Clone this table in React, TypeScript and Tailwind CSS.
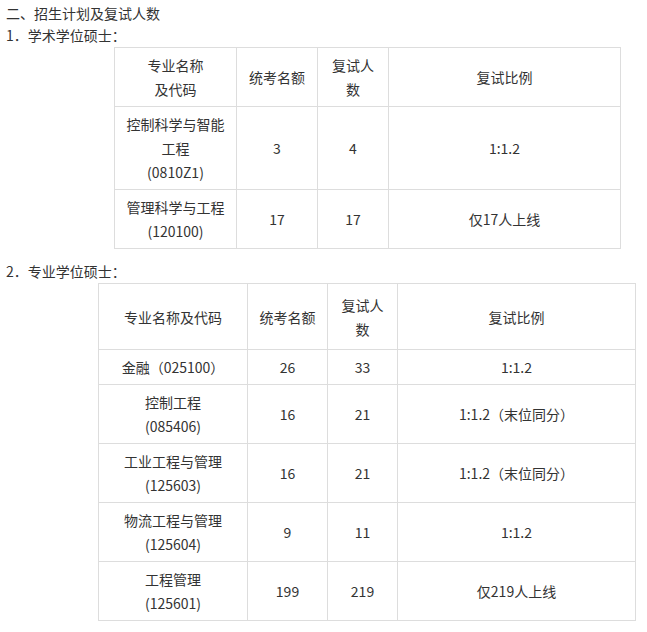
import React from 'react';

type Row = { h: string; cells: React.ReactNode[] };

const academic: Row[] = [
  {
    h: 'h-[59px]',
    cells: [
      <>专业名称<br />及代码</>,
      '统考名额',
      <>复试人<br />数</>,
      '复试比例',
    ],
  },
  {
    h: 'h-[83px]',
    cells: [<>控制科学与智能<br />工程<br />(0810Z1)</>, '3', '4', '1:1.2'],
  },
  {
    h: 'h-[59px]',
    cells: [<>管理科学与工程<br />(120100)</>, '17', '17', '仅17人上线'],
  },
];

const professional: Row[] = [
  {
    h: 'h-[66px]',
    cells: ['专业名称及代码', '统考名额', <>复试人<br />数</>, '复试比例'],
  },
  { h: 'h-[35px]', cells: ['金融（025100）', '26', '33', '1:1.2'] },
  { h: 'h-[59px]', cells: [<>控制工程<br />(085406)</>, '16', '21', '1:1.2（末位同分）'] },
  { h: 'h-[59px]', cells: [<>工业工程与管理<br />(125603)</>, '16', '21', '1:1.2（末位同分）'] },
  { h: 'h-[59px]', cells: [<>物流工程与管理<br />(125604)</>, '9', '11', '1:1.2'] },
  { h: 'h-[59px]', cells: [<>工程管理<br />(125601)</>, '199', '219', '仅219人上线'] },
];

function Table({ rows, cols, className }: { rows: Row[]; cols: string; className: string }) {
  return (
    <div className={`grid border-l border-t border-[#dddddd] ${cols} ${className}`}>
      {rows.map((row, i) =>
        row.cells.map((cell, j) => (
          <div
            key={`${i}-${j}`}
            className={`flex items-center justify-center border-b border-r border-[#dddddd] text-center ${row.h}`}
          >
            <div>{cell}</div>
          </div>
        )),
      )}
    </div>
  );
}

export default function App() {
  return (
    <div
      className="min-h-screen bg-white pl-[6px] pt-[2px] text-[14px] leading-[24px] text-[#333333]"
      style={{ fontFamily: '"Noto Sans CJK SC", "Noto Sans", sans-serif' }}
    >
      <p className="leading-[22px]">二、招生计划及复试人数</p>
      <p className="leading-[22px]">1．学术学位硕士：</p>
      <Table
        rows={academic}
        cols="grid-cols-[122px_81px_71px_232px]"
        className="ml-[108px] mt-px w-[507px]"
      />
      <p className="mt-[11px] leading-[22px]">2．专业学位硕士：</p>
      <Table
        rows={professional}
        cols="grid-cols-[149px_80px_70px_238px]"
        className="mt-px ml-[92px] w-[538px]"
      />
    </div>
  );
}
